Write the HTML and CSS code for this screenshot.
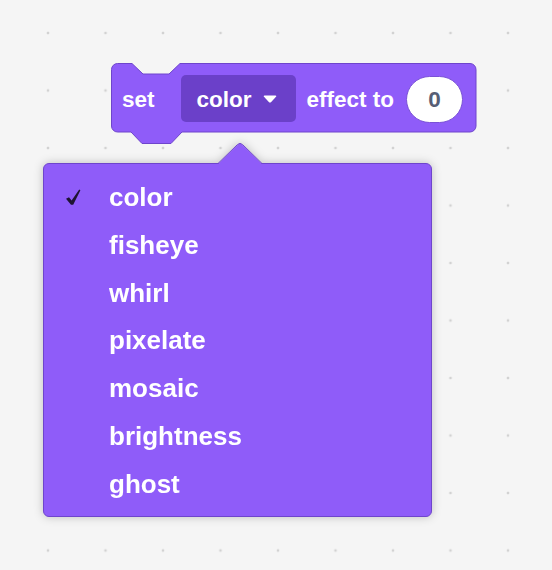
FILE: index.html
```html
<!DOCTYPE html>
<html>
<head>
<meta charset="utf-8">
<link rel="stylesheet" href="styles.css">
</head>
<body>
<div class="workspace">
  <div class="block">
    <svg class="block-shape" width="366" height="82" viewBox="0 0 366 82">
      <path d="M0.5,6.5 A6,6 0 0 1 6.5,0.5 H21 L32,11 H58 L69,0.5 H359 A6,6 0 0 1 365,6.5 V63 A6,6 0 0 1 359,69 H71 L60,80.5 H31 L20,69 H6.5 A6,6 0 0 1 0.5,63 Z" fill="#8f5cf9" stroke="#6e45cc" stroke-width="1"/>
    </svg>
    <div class="block-row">
      <span class="label label-set">set</span>
      <div class="field">
        <span class="field-text">color</span>
        <svg class="caret" width="14" height="8" viewBox="0 0 14 8"><path d="M1.5,0.5 H12.5 Q14,0.5 13,1.8 L8.2,7 Q7,8.2 5.8,7 L1,1.8 Q0,0.5 1.5,0.5 Z" fill="#fff"/></svg>
      </div>
      <span class="label label-effect">effect to</span>
      <div class="input"><span class="input-text">0</span></div>
    </div>
  </div>

  <div class="menu">
    <svg class="menu-arrow" width="44" height="23" viewBox="0 0 44 23">
      <path d="M0,21 L19.5,2 Q22,-0.3 24.5,2 L44,21 L44,23 L0,23 Z" fill="#8f5cf9"/>
      <path d="M0,20.5 L19.5,1.5 Q22,-0.8 24.5,1.5 L44,20.5" fill="none" stroke="#6e45cc" stroke-width="1"/>
    </svg>
    <ul class="menu-list">
      <li class="item"><span class="check"><svg width="16" height="18" viewBox="0 0 16 18"><path d="M0,10.8 L3,9.2 L5.6,12.6 L13.2,1.4 L14.4,2.2 L7.2,16.8 L5,16.8 Z" fill="#1e1433"/></svg></span><span>color</span></li>
      <li class="item"><span class="check"></span><span>fisheye</span></li>
      <li class="item"><span class="check"></span><span>whirl</span></li>
      <li class="item"><span class="check"></span><span>pixelate</span></li>
      <li class="item"><span class="check"></span><span>mosaic</span></li>
      <li class="item"><span class="check"></span><span>brightness</span></li>
      <li class="item"><span class="check"></span><span>ghost</span></li>
    </ul>
  </div>
</div>
</body>
</html>
```

FILE: styles.css
```css
html, body {
  margin: 0;
  padding: 0;
}

body {
  width: 552px;
  height: 570px;
  overflow: hidden;
  background-color: #f5f5f5;
  background-image: radial-gradient(circle, #d2d2d2 1.1px, rgba(210,210,210,0) 1.7px);
  background-size: 57.5px 57.5px;
  background-position: 19.25px 4.25px;
  font-family: "Liberation Sans", Arial, sans-serif;
  font-weight: bold;
  color: #fff;
}

.workspace {
  position: relative;
  width: 552px;
  height: 570px;
}

/* block on the canvas */
.block {
  position: absolute;
  left: 111px;
  top: 63px;
  width: 366px;
  height: 82px;
}

.block-shape {
  position: absolute;
  left: 0;
  top: 0;
}

.block-row {
  position: relative;
  display: flex;
  align-items: center;
  height: 70px;
  padding-left: 11px;
  font-size: 22.5px;
}

.label {
  padding-top: 4px;
}

.label-set {
  margin-right: 26px;
}

.field {
  display: flex;
  align-items: center;
  gap: 11px;
  box-sizing: border-box;
  width: 115px;
  height: 47px;
  padding-left: 16px;
  border-radius: 5px;
  background: #6b40c9;
  margin-top: 1px;
}

.field-text {
  padding-top: 3px;
}

.caret {
  display: block;
  margin-top: 1px;
}

.label-effect {
  margin-left: 11px;
  margin-right: 12px;
}

.input {
  box-sizing: border-box;
  width: 57px;
  height: 47px;
  border-radius: 24px;
  background: #fff;
  border: 1px solid #7a52d6;
  color: #575e75;
  display: flex;
  align-items: center;
  justify-content: center;
  margin-top: 2px;
}

.input-text {
  padding-top: 2px;
}

/* dropdown menu */
.menu {
  position: absolute;
  left: 43px;
  top: 163px;
  width: 389px;
  height: 354px;
  box-sizing: border-box;
  background: #8f5cf9;
  border: 1px solid #6e45cc;
  border-radius: 6px;
  padding-top: 10px;
  filter: drop-shadow(0 0 5px rgba(0, 0, 0, 0.22));
}

.menu-arrow {
  position: absolute;
  left: 174px;
  top: -21px;
  display: block;
}

.menu-list {
  list-style: none;
  margin: 0;
  padding: 0;
}

.item {
  display: flex;
  height: 47.8px;
  line-height: 47.8px;
  font-size: 26px;
}

.check {
  width: 65px;
  flex: none;
  position: relative;
}

.check svg {
  position: absolute;
  left: 22px;
  top: 14px;
}
```
